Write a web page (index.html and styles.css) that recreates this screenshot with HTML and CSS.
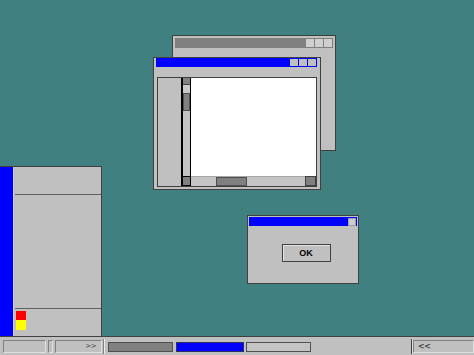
FILE: index.html
```html
<!DOCTYPE html>
<html>
<head>
<meta charset="utf-8">
<link rel="stylesheet" href="styles.css">
</head>
<body>
<div class="screen">
  <div class="desktop">
    <div class="win back">
      <div class="title gray">
        <i class="tbtn"></i><i class="tbtn"></i><i class="tbtn"></i>
      </div>
    </div>

    <div class="win front">
      <div class="ftitle">
        <div class="fbar"></div>
        <i class="fbtn"></i><i class="fbtn"></i><i class="fbtn"></i>
      </div>
      <div class="menubar"></div>
      <div class="content">
        <div class="side"></div>
        <div class="vscroll">
          <div class="vtop"></div>
          <div class="vlight"></div>
          <div class="vthumb"></div>
        </div>
        <div class="page"></div>
        <div class="corner"></div>
        <div class="hscroll">
          <div class="htrack"><div class="hthumb"></div></div>
          <div class="hend"></div>
        </div>
      </div>
    </div>

    <div class="dialog">
      <div class="dtitle"><i class="dclose"></i></div>
      <div class="dbody"><button class="ok">OK</button></div>
    </div>

    <div class="menu">
      <div class="strip"></div>
      <div class="items">
        <div class="sec-top"></div>
        <div class="sep"></div>
        <div class="sec-mid"></div>
        <div class="sep"></div>
        <div class="sec-bot">
          <div class="sq red"></div>
          <div class="sq yellow"></div>
        </div>
      </div>
    </div>
  </div>

  <div class="taskbar">
    <div class="tb tb1"></div>
    <div class="tb tbsm"></div>
    <div class="tb tb2"><span class="arrows">&gt;&gt;</span></div>
    <div class="tsep"></div>
    <div class="bars">
      <div class="tbar dark"></div>
      <div class="tbar blue"></div>
      <div class="tbar light"></div>
    </div>
    <div class="tsep right"></div>
    <div class="tb tb3"><span class="arrows2">&lt;&lt;</span></div>
  </div>
</div>
</body>
</html>
```

FILE: styles.css
```css
* { box-sizing: border-box; }
html, body { margin: 0; padding: 0; }
body {
  width: 474px;
  height: 355px;
  overflow: hidden;
  font-family: "Liberation Sans", Arial, sans-serif;
}
.screen {
  display: flex;
  flex-direction: column;
  width: 474px;
  height: 355px;
}
.desktop {
  position: relative;
  height: 336px;
  background: #408080;
}

/* back window */
.win {
  position: absolute;
  background: #c0c0c0;
  border: 1px solid #404040;
}
.back {
  left: 172px;
  top: 35px;
  width: 164px;
  height: 116px;
  padding: 2px;
}
.title.gray {
  height: 10px;
  background: #808080;
  display: flex;
  justify-content: flex-end;
  align-items: center;
  gap: 1px;
  padding-right: 1px;
}
.tbtn {
  display: block;
  width: 8px;
  height: 8px;
  background: #cfcfcf;
}

/* front window */
.front {
  left: 153px;
  top: 57px;
  width: 168px;
  height: 133px;
  padding: 0 3px 2px 2px;
  z-index: 2;
}
.ftitle {
  display: flex;
  height: 9px;
}
.fbar {
  flex: 1;
  background: #0000ff;
}
.fbtn {
  display: block;
  width: 10px;
  height: 9px;
  background: #c0c0c0;
  border: 1px solid #0000ff;
  margin-left: -1px;
}
.menubar {
  height: 10px;
}
.content {
  margin-left: 1px;
  height: 110px;
  border: 1px solid #404040;
  display: grid;
  grid-template-columns: 23px 10px 1fr;
  grid-template-rows: 1fr 10px;
}
.side {
  grid-row: 1 / 3;
  grid-column: 1;
  background: #c0c0c0;
}
.vscroll {
  grid-row: 1;
  grid-column: 2;
  background: #c4c4c4;
  border-left: 2px solid #000;
  border-right: 1px solid #000;
  display: flex;
  flex-direction: column;
}
.vtop {
  height: 7px;
  background: #808080;
  border-bottom: 1px solid #404040;
}
.vlight {
  height: 8px;
  background: #c8c8c8;
}
.vthumb {
  height: 18px;
  background: #808080;
  border: 1px solid #505050;
}
.page {
  grid-row: 1;
  grid-column: 3;
  background: #ffffff;
}
.corner {
  grid-row: 2;
  grid-column: 2;
  background: #808080;
  border: 1px solid #000;
  border-left-width: 2px;
}
.hscroll {
  grid-row: 2;
  grid-column: 3;
  display: flex;
}
.htrack {
  flex: 1;
  background: #c4c4c4;
  border-top: 1px solid #a8a8a8;
}
.hthumb {
  margin-left: 25px;
  width: 31px;
  height: 9px;
  background: #808080;
  border: 1px solid #505050;
}
.hend {
  width: 11px;
  background: #808080;
  border: 1px solid #404040;
}

/* dialog */
.dialog {
  position: absolute;
  left: 247px;
  top: 215px;
  width: 112px;
  height: 69px;
  background: #c0c0c0;
  border: 1px solid #404040;
  padding: 1px;
  display: flex;
  flex-direction: column;
}
.dtitle {
  height: 9px;
  background: #0000ff;
  display: flex;
  justify-content: flex-end;
  align-items: center;
  padding-right: 1px;
}
.dclose {
  display: block;
  width: 8px;
  height: 8px;
  background: #cccccc;
  border: 1px solid #a0a0a0;
}
.dbody {
  flex: 1;
  display: flex;
  align-items: center;
  justify-content: center;
  padding-left: 6px;
  padding-bottom: 2px;
}
.ok {
  width: 49px;
  height: 18px;
  padding: 0;
  margin: 0;
  background: #c0c0c0;
  border: 1px solid #404040;
  box-shadow: inset 1px 1px 0 #e4e4e4;
  font-family: "Liberation Sans", Arial, sans-serif;
  font-weight: bold;
  font-size: 9px;
  color: #000;
  line-height: 16px;
}

/* start menu */
.menu {
  position: absolute;
  left: 0;
  top: 166px;
  width: 102px;
  height: 170px;
  background: #c0c0c0;
  border-top: 1px solid #404040;
  border-right: 1px solid #404040;
  display: flex;
}
.strip {
  width: 14px;
  background: #0000ff;
  border-right: 1px solid #d0d0d0;
}
.items {
  flex: 1;
  display: flex;
  flex-direction: column;
}
.sec-top { height: 27px; }
.sep {
  height: 1px;
  margin: 0 0 0 1px;
  background: #606060;
}
.sec-mid { height: 113px; }
.sec-bot {
  flex: 1;
  padding: 2px 0 0 2px;
}
.sq { width: 10px; }
.red { height: 9px; background: #ff0000; }
.yellow { height: 10px; background: #ffff00; }

/* taskbar */
.taskbar {
  height: 19px;
  background: #c0c0c0;
  border-top: 1px solid #404040;
  display: flex;
  align-items: flex-start;
  padding: 3px 0 0 3px;
}
.tb {
  height: 13px;
  border-top: 1px solid #808080;
  border-left: 1px solid #808080;
  border-right: 1px solid #e0e0e0;
  border-bottom: 1px solid #e0e0e0;
  background: #c0c0c0;
}
.tb1 { width: 43px; }
.tbsm { width: 5px; margin-left: 2px; }
.tb2 {
  width: 47px;
  margin-left: 2px;
  display: flex;
  justify-content: flex-end;
  align-items: center;
  padding-right: 5px;
}
.arrows {
  font-family: "DejaVu Sans", sans-serif;
  font-size: 7px;
  color: #404040;
  line-height: 7px;
  letter-spacing: -0.5px;
}
.tsep {
  width: 2px;
  height: 15px;
  margin-top: -1px;
  margin-left: 1px;
  border-left: 1px solid #808080;
  border-right: 1px solid #ececec;
}
.bars {
  display: flex;
  margin-left: 3px;
  margin-top: 2px;
  gap: 2px;
}
.tbar {
  height: 10px;
}
.tbar.dark {
  width: 65px;
  background: #808080;
  border: 1px solid #505050;
  margin-right: 1px;
}
.tbar.blue {
  width: 68px;
  background: #0000ff;
  border: 1px solid #303060;
}
.tbar.light {
  width: 65px;
  background: #c4c4c4;
  border: 1px solid #505050;
}
.tsep.right {
  margin-left: auto;
  border-left: 1px solid #404040;
  border-right: 1px solid #e0e0e0;
}
.tb3 {
  width: 61px;
  margin-left: 0;
  display: flex;
  align-items: center;
  padding-left: 4px;
}
.arrows2 {
  font-family: "DejaVu Sans", sans-serif;
  font-size: 8px;
  line-height: 8px;
  color: #202020;
  letter-spacing: -0.5px;
}
```
